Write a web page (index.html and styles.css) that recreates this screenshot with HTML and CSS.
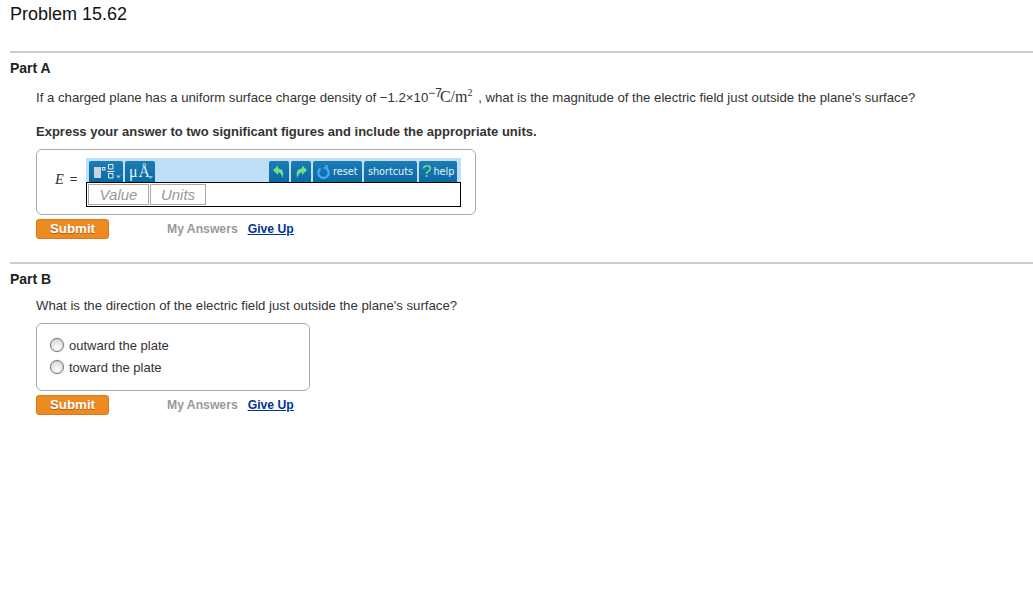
FILE: index.html
```html
<!DOCTYPE html>
<html lang="en">
<head>
<meta charset="utf-8">
<title>Problem 15.62</title>
<link rel="stylesheet" href="styles.css">
</head>
<body>
<h1 class="title">Problem 15.62</h1>
<section class="part part-a">
  <h2 class="part-title">Part A</h2>
  <div class="part-body">
    <p class="question">If a charged plane has a uniform surface charge density of <span class="minus">−</span>1.2×10<sup class="exp">−7</sup><span class="math">C/m<sup class="sq">2</sup></span> , what is the magnitude of the electric field just outside the plane's surface?</p>
    <p class="instruction">Express your answer to two significant figures and include the appropriate units.</p>
    <div class="editor">
      <div class="label"><i class="var">E</i><span class="eq">=</span></div>
      <div class="answer">
        <div class="toolbar">
          <div class="tools-left">
            <span class="tbtn tbtn-templates">
              <svg width="34" height="20" viewBox="0 0 34 20"><rect x="5" y="5" width="7" height="11" fill="#c9d3d9"/><rect x="13.500" y="5.500" width="2.500" height="2.500" fill="none" stroke="#dfe8ee"/><path d="M19.500 2.500h4.500v4.500h-4.500zM18 9.500h7.500M19.500 11.500h4.500v4.500h-4.500z" fill="none" stroke="#e8f0f5"/><path d="M27 13.500h5l-2.500 3z" fill="#8cc0e0"/></svg>
            </span>
            <span class="tbtn tbtn-units">μÅ<svg class="caret" width="5" height="3" viewBox="0 0 5 3"><path d="M0 0h5l-2.500 3z" fill="#8cc0e0"/></svg></span>
          </div>
          <div class="tools-right">
            <span class="tbtn tbtn-arrow"><svg width="19" height="20" viewBox="0 0 19 20"><path d="M4 8 9 3.500V6.500C13.500 6.500 15.500 10.500 13.500 16 13 12.500 11.500 10.500 9 10.500V13Z" fill="#6fe08a"/></svg></span>
            <span class="tbtn tbtn-arrow"><svg width="20" height="20" viewBox="0 0 20 20"><path d="M16 8 11 3.500V6.500C6.500 6.500 4.500 10.500 6.500 16 7 12.500 8.500 10.500 11 10.500V13Z" fill="#6fe08a"/></svg></span>
            <span class="tbtn tbtn-reset"><svg width="15" height="16" viewBox="0 0 15 16"><path d="M4.500 4.500a5.200 5.200 0 1 0 6 0V1" fill="none" stroke="#45aaee" stroke-width="2.400"/><path d="M7 4h5" stroke="#45aaee" stroke-width="1.500"/></svg>reset</span>
            <span class="tbtn tbtn-text">shortcuts</span>
            <span class="tbtn tbtn-help"><span class="qmark">?</span>help</span>
          </div>
        </div>
        <div class="inputs">
          <span class="field field-value">Value</span>
          <span class="field field-units">Units</span>
        </div>
      </div>
    </div>
    <div class="actions">
      <span class="submit">Submit</span>
      <span class="my-answers">My Answers</span>
      <a class="give-up" href="#">Give Up</a>
    </div>
  </div>
</section>
<section class="part part-b">
  <h2 class="part-title">Part B</h2>
  <div class="part-body">
    <p class="question question-b">What is the direction of the electric field just outside the plane's surface?</p>
    <div class="choices">
      <label class="choice"><span class="radio"></span>outward the plate</label>
      <label class="choice"><span class="radio"></span>toward the plate</label>
    </div>
    <div class="actions actions-b">
      <span class="submit">Submit</span>
      <span class="my-answers">My Answers</span>
      <a class="give-up" href="#">Give Up</a>
    </div>
  </div>
</section>
</body>
</html>
```
FILE: styles.css
```css
* { box-sizing: border-box; }
html, body { margin: 0; padding: 0; background: #fff; }
body { font-family: "Liberation Sans", Arial, sans-serif; font-size: 13.200px; color: #333; height: 614px; overflow: hidden; }
.title { margin: 0; padding: 4px 0 0 10px; height: 51px; font-size: 18px; line-height: 21px; font-weight: normal; color: #111; }
.part { border-top: 2px solid #ccc; margin-left: 10px; }
.part-a { height: 211px; }
.part-title { margin: 0; padding: 7px 0 0; font-size: 14px; line-height: 16px; font-weight: bold; color: #222; }
.part-body { padding-left: 26px; }
.question { margin: 0; padding-top: 13px; line-height: 16px; height: 29px; white-space: nowrap; }
.exp { font-size: 12px; line-height: 0; vertical-align: 5px; margin-right: -2px; }
.math { font-family: "Liberation Serif", serif; font-size: 16px; }
.sq { font-size: 10px; line-height: 0; vertical-align: 6px; margin-right: 2px; }
.instruction { margin: 0; padding-top: 19px; line-height: 16px; font-size: 13px; font-weight: bold; height: 39px; }
.editor { margin-top: 5px; width: 440px; height: 66px; border: 1px solid #aaa; border-radius: 6px; display: flex; padding: 8px 14px 0 0; }
.label { width: 49px; padding: 13px 0 0 18px; line-height: 16px; white-space: nowrap; display: flex; gap: 6px; }
.var { font-family: "Liberation Serif", serif; font-size: 14.500px; }
.eq { font-size: 13px; }
.answer { width: 375px; }
.toolbar { height: 24px; background: #bfdff9; display: flex; justify-content: space-between; padding: 3px 4px 0 3px; }
.tools-left, .tools-right { display: flex; gap: 2px; }
.tbtn { height: 21px; background: linear-gradient(#1a7db5, #0b6aa3); border-radius: 2px 2px 0 0; color: #e8f2f8; display: flex; align-items: center; font-family: "DejaVu Sans", sans-serif; font-size: 9.700px; white-space: nowrap; }
.tbtn-templates { width: 34px; }
.tbtn-units { width: 30px; padding-left: 4px; font-family: "Liberation Serif", serif; font-size: 16px; letter-spacing: 1px; position: relative; }
.caret { position: absolute; right: 2px; bottom: 3px; }
.tbtn-arrow { width: 20px; }
.tbtn-reset { width: 49px; padding-left: 3px; gap: 2px; }
.tbtn-text { width: 53px; justify-content: center; }
.tbtn-help { width: 38px; padding-left: 3px; gap: 2px; }
.qmark { color: #6fe08a; font-family: "Liberation Sans", sans-serif; font-size: 17px; }
.inputs { height: 25px; border: 1px solid #000; display: flex; gap: 1px; padding: 1px; }
.field { height: 21px; border: 1px solid #aaa; display: flex; align-items: center; justify-content: center; color: #999; font-style: italic; font-size: 15px; }
.field-value { width: 61px; }
.field-units { width: 56px; }
.actions { display: flex; align-items: center; margin-top: 4px; height: 20px; font-weight: bold; }
.submit { width: 73px; height: 20px; background: #ee8a22; border: 1px solid #d87818; border-radius: 3px; color: #fff; text-align: center; line-height: 17px; font-size: 13.300px; text-shadow: 0 1px 1px #a85c10; }
.my-answers { margin-left: 58px; color: #999; font-size: 12.200px; }
.give-up { margin-left: 10px; color: #003399; font-size: 12.200px; }
.question-b { padding-top: 11px; height: 27px; }
.choices { margin-top: 9px; width: 274px; height: 68px; border: 1px solid #aaa; border-radius: 6px; padding: 13px 0 0 13px; display: flex; flex-direction: column; gap: 6px; font-size: 13px; }
.choice { display: flex; align-items: center; height: 16px; gap: 5px; }
.radio { width: 14px; height: 14px; border-radius: 50%; border: 1px solid #777; background: radial-gradient(circle at 50% 70%, #fff, #ccc); box-shadow: 0 0 1px #999; }
.actions-b { margin-top: 4px; }
```
